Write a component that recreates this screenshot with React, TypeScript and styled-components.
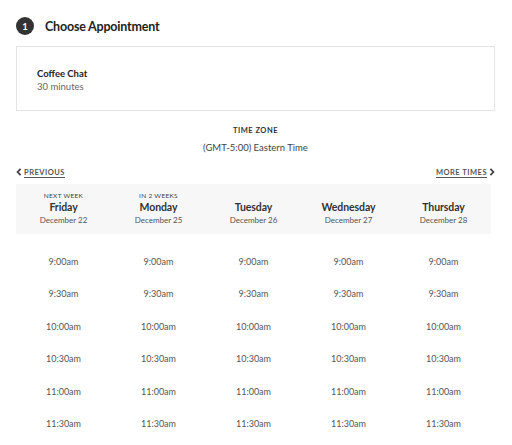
import styled, { createGlobalStyle } from "styled-components"

const Global = createGlobalStyle`
  body {
    margin: 0;
    background: #fff;
    font-family: Lato, "Open Sans", sans-serif;
    color: #333;
  }
`

const Page = styled.div`
  padding: 17px 17px 0 16px;
`

const Heading = styled.div`
  display: flex;
  align-items: center;
  gap: 11px;
  height: 18px;
`

const StepBadge = styled.span`
  width: 18px;
  height: 18px;
  border-radius: 50%;
  background: #333;
  color: #fff;
  font-size: 9.5px;
  font-weight: 700;
  display: flex;
  align-items: center;
  justify-content: center;
`

const Title = styled.h2`
  margin: 0;
  font-size: 12.5px;
  font-weight: 700;
  letter-spacing: -0.2px;
  color: #222;
`

const Card = styled.div`
  margin-top: 11px;
  height: 65px;
  box-sizing: border-box;
  border: 1px solid #e4e4e4;
  padding: 20px 20px;
`

const CardTitle = styled.div`
  font-size: 9.5px;
  font-weight: 700;
  color: #222;
  line-height: 13px;
`

const CardSub = styled.div`
  font-size: 9.5px;
  color: #666;
  line-height: 13px;
`

const Zone = styled.div`
  margin-top: 14px;
  text-align: center;
`

const ZoneLabel = styled.div`
  font-size: 7.5px;
  font-weight: 700;
  letter-spacing: 0.5px;
  color: #333;
  line-height: 12px;
`

const ZoneValue = styled.div`
  margin-top: 4px;
  font-size: 9.5px;
  color: #444;
  line-height: 13px;
`

const Nav = styled.div`
  margin-top: 12px;
  display: flex;
  justify-content: space-between;
  align-items: center;
  height: 12px;
`

const NavLink = styled.a`
  display: flex;
  align-items: center;
  gap: 2px;
  font-size: 7.5px;
  font-weight: 700;
  letter-spacing: 0.5px;
  color: #555;
  text-decoration: underline;
  text-underline-offset: 2px;
  cursor: pointer;
`

const Table = styled.div`
  margin-top: 6px;
  margin-right: 4px;
`

const HeadRow = styled.div`
  display: grid;
  grid-template-columns: repeat(5, 1fr);
  background: #f7f7f7;
  height: 50px;
  align-items: end;
  padding-bottom: 8px;
  box-sizing: border-box;
`

const DayHead = styled.div`
  text-align: center;
`

const Week = styled.div`
  font-size: 6.5px;
  letter-spacing: 0.3px;
  color: #444;
  line-height: 9px;
`

const DayName = styled.div`
  font-size: 10.5px;
  font-weight: 700;
  letter-spacing: -0.1px;
  color: #333;
  line-height: 14px;
`

const DayDate = styled.div`
  font-size: 8px;
  color: #555;
  line-height: 12px;
`

const Slots = styled.div`
  margin-top: 11px;
  display: grid;
  grid-template-columns: repeat(5, 1fr);
  grid-auto-rows: 32.5px;
  align-items: center;
`

const Slot = styled.div`
  text-align: center;
  font-size: 9px;
  color: #555;
`

const Chevron = ({ dir }: { dir: "left" | "right" }) => (
  <svg width="6" height="8" viewBox="0 0 6 8">
    <path
      d={dir === "left" ? "M4.6 0.8 L1.6 4 L4.6 7.2" : "M1.4 0.8 L4.4 4 L1.4 7.2"}
      fill="none"
      stroke="#444"
      strokeWidth="1.8"
    />
  </svg>
)

const days = [
  { week: "NEXT WEEK", name: "Friday", date: "December 22" },
  { week: "IN 2 WEEKS", name: "Monday", date: "December 25" },
  { week: "", name: "Tuesday", date: "December 26" },
  { week: "", name: "Wednesday", date: "December 27" },
  { week: "", name: "Thursday", date: "December 28" },
]

const times = ["9:00am", "9:30am", "10:00am", "10:30am", "11:00am", "11:30am"]

export default function App() {
  return (
    <Page>
      <Global />
      <Heading>
        <StepBadge>1</StepBadge>
        <Title>Choose Appointment</Title>
      </Heading>
      <Card>
        <CardTitle>Coffee Chat</CardTitle>
        <CardSub>30 minutes</CardSub>
      </Card>
      <Zone>
        <ZoneLabel>TIME ZONE</ZoneLabel>
        <ZoneValue>(GMT-5:00) Eastern Time</ZoneValue>
      </Zone>
      <Nav>
        <NavLink>
          <Chevron dir="left" />
          PREVIOUS
        </NavLink>
        <NavLink>
          MORE TIMES
          <Chevron dir="right" />
        </NavLink>
      </Nav>
      <Table>
        <HeadRow>
          {days.map((d) => (
            <DayHead key={d.name}>
              {d.week && <Week>{d.week}</Week>}
              <DayName>{d.name}</DayName>
              <DayDate>{d.date}</DayDate>
            </DayHead>
          ))}
        </HeadRow>
        <Slots>
          {times.map((t) =>
            days.map((d) => <Slot key={t + d.name}>{t}</Slot>)
          )}
        </Slots>
      </Table>
    </Page>
  )
}
